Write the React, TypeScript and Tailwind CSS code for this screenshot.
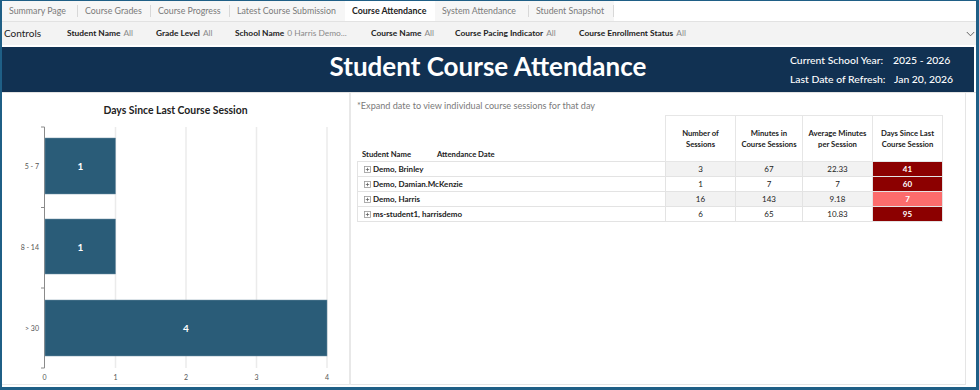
import React from "react";

const tabs = [
  { label: "Summary Page", cls: "w-[75px]", sep: true, active: false },
  { label: "Course Grades", cls: "w-[72px]", sep: true, active: false },
  { label: "Course Progress", cls: "w-[78px]", sep: true, active: false },
  { label: "Latest Course Submission", cls: "w-[115px]", sep: false, active: false },
  { label: "Course Attendance", cls: "w-[90px]", sep: false, active: true },
  { label: "System Attendance", cls: "w-[93px]", sep: true, active: false },
  { label: "Student Snapshot", cls: "w-[84px]", sep: true, active: false },
];

const filters = [
  { label: "Student Name", value: "All", cls: "w-[89px]" },
  { label: "Grade Level", value: "All", cls: "w-[79px]" },
  { label: "School Name", value: "0 Harris Demo...", cls: "w-[136px]" },
  { label: "Course Name", value: "All", cls: "w-[84px]" },
  { label: "Course Pacing Indicator", value: "All", cls: "w-[124px]" },
  { label: "Course Enrollment Status", value: "All", cls: "" },
];

const rows = [
  { name: "Demo, Brinley", n: "3", m: "67", a: "22.33", d: "41", dc: "bg-[#8c0000]", band: true },
  { name: "Demo, Damian.McKenzie", n: "1", m: "7", a: "7", d: "60", dc: "bg-[#8c0000]", band: false },
  { name: "Demo, Harris", n: "16", m: "143", a: "9.18", d: "7", dc: "bg-[#fc6c6c]", band: true },
  { name: "ms-student1, harrisdemo", n: "6", m: "65", a: "10.83", d: "95", dc: "bg-[#8c0000]", band: false },
];

function PlusBox() {
  return (
    <svg width="7" height="7" viewBox="0 0 7 7" className="shrink-0">
      <rect x="0.5" y="0.5" width="6" height="6" fill="white" stroke="#9a9a9a" strokeWidth="0.8" />
      <line x1="1.8" y1="3.5" x2="5.2" y2="3.5" stroke="#555" strokeWidth="0.7" />
      <line x1="3.5" y1="1.8" x2="3.5" y2="5.2" stroke="#555" strokeWidth="0.7" />
    </svg>
  );
}

function Chart() {
  const grid = [115.5, 186, 256.5, 327];
  const xt = [
    { x: 44.5, t: "0" },
    { x: 115.5, t: "1" },
    { x: 186, t: "2" },
    { x: 256.5, t: "3" },
    { x: 327, t: "4" },
  ];
  const ticks = [127, 207.5, 288, 368];
  return (
    <svg width="347" height="267" viewBox="2 117 347 267" className="block">
      {grid.map((x) => (
        <line key={x} x1={x} y1={127} x2={x} y2={368} stroke="#ebebeb" strokeWidth="1.5" />
      ))}
      <line x1={44.5} y1={127} x2={44.5} y2={368} stroke="#8a8a8a" strokeWidth="1" />
      {ticks.map((y) => (
        <line key={y} x1={41} y1={y} x2={44.5} y2={y} stroke="#8a8a8a" strokeWidth="1" />
      ))}
      <rect x={45} y={138} width={70.5} height={56} fill="#2a5c78" stroke="#6f90a5" strokeWidth="0.5" />
      <rect x={45} y={219} width={70.5} height={55} fill="#2a5c78" stroke="#6f90a5" strokeWidth="0.5" />
      <rect x={45} y={300} width={282} height={56} fill="#2a5c78" stroke="#6f90a5" strokeWidth="0.5" />
      <g fill="#ffffff" fontSize="10" fontWeight="700" textAnchor="middle" dominantBaseline="central" fontFamily="Lato, sans-serif">
        <text x={80.5} y={166}>1</text>
        <text x={80.5} y={246.5}>1</text>
        <text x={186} y={328}>4</text>
      </g>
      <g fill="#555" fontSize="7" textAnchor="end" dominantBaseline="central" fontFamily="Lato, sans-serif">
        <text x={39} y={166}>5 - 7</text>
        <text x={39} y={246.5}>8 - 14</text>
        <text x={39} y={327.5}>&gt; 30</text>
      </g>
      <g fill="#555" fontSize="7" textAnchor="middle" dominantBaseline="central" fontFamily="Lato, sans-serif">
        {xt.map((t) => (
          <text key={t.t} x={t.x} y={376.5}>
            {t.t}
          </text>
        ))}
      </g>
    </svg>
  );
}

export default function App() {
  return (
    <div className="w-[979px] h-[390px] border-t border-l-2 border-r-[3px] border-b-[3px] border-[#1f5f86] bg-white flex flex-col overflow-hidden font-['Lato',sans-serif] text-[#222]">
      {/* Tabs */}
      <div className="h-[21px] flex shrink-0 border-b border-[#e2e2e2] bg-white">
        {tabs.map((t) => (
          <React.Fragment key={t.label}>
            <div
              className={
                t.active
                  ? `${t.cls} h-full flex items-center pl-[7px] bg-white text-[8.8px] font-bold text-[#222] whitespace-nowrap`
                  : `${t.cls} h-full flex items-center pl-[7px] bg-[#f6f6f6] text-[8.8px] text-[#7a7a7a] whitespace-nowrap`
              }
            >
              {t.label}
            </div>
            {t.sep && (
              <div className="w-px h-full bg-[#f6f6f6] flex items-center">
                <div className="w-px h-[12px] bg-[#d8d8d8]" />
              </div>
            )}
          </React.Fragment>
        ))}
      </div>

      {/* Controls */}
      <div className="h-[23px] shrink-0 bg-[#f3f3f3] flex items-center whitespace-nowrap">
        <div className="w-[65px] pl-[2px] text-[10px] text-[#222]">Controls</div>
        {filters.map((f) => (
          <div key={f.label} className={`${f.cls} flex items-center text-[8.4px]`}>
            <span className="font-bold text-[#222]">{f.label}</span>
            <span className="ml-[3px] text-[#8a8a8a]">{f.value}</span>
          </div>
        ))}
        <div className="ml-auto mr-[1px] flex items-center">
          <svg width="9" height="6" viewBox="0 0 9 6">
            <polyline points="0.8,1 4.5,4.8 8.2,1" fill="none" stroke="#555" strokeWidth="0.9" />
          </svg>
        </div>
      </div>

      {/* Banner */}
      <div className="mt-[2px] mr-[2px] h-[45px] shrink-0 bg-[#113152] grid grid-cols-[1fr_auto_1fr] items-center">
        <div />
        <div className="text-white font-bold text-[26px] leading-[31px] pb-[6px] whitespace-nowrap">
          Student Course Attendance
        </div>
        <div className="flex justify-end pr-[21px]">
          <div className="grid grid-cols-[103px_auto] text-white text-[10.4px] leading-[19px] font-medium whitespace-nowrap">
            <span>Current School Year:</span>
            <span>2025 - 2026</span>
            <span>Last Date of Refresh:</span>
            <span className="pl-[1px]">Jan 20, 2026</span>
          </div>
        </div>
      </div>

      {/* Content */}
      <div className="flex-1 flex border-t border-[#e3e3e3] pb-[2px] min-h-0">
        {/* Left panel */}
        <div className="w-[349px] shrink-0 border-r-2 border-b border-[#e8e8e8] flex flex-col">
          <div className="pt-[11px] text-center text-[10.4px] leading-[13px] font-bold text-[#222]">
            Days Since Last Course Session
          </div>
          <Chart />
        </div>

        {/* Right panel */}
        <div className="w-[615px] shrink-0 border-r border-b border-[#e5e5e5] pl-[6px] flex flex-col">
          <div className="pt-[7px] leading-[12px] text-[9.1px] text-[#7a7a7a] whitespace-nowrap">
            *Expand date to view individual course sessions for that day
          </div>
          <div className="mt-[3px] flex flex-col text-[7.7px]">
            {/* Header */}
            <div className="flex h-[47px]">
              <div className="w-[308px] border-b border-[#e3e3e3] flex items-end pb-[1px] pl-[5px] leading-[11px] font-bold">
                <span className="w-[75px]">Student Name</span>
                <span>Attendance Date</span>
              </div>
              <div className="w-[70px] border-t border-l border-b border-[#e6e6e6] flex items-center justify-center text-center leading-[11px] font-bold">
                Number of<br />Sessions
              </div>
              <div className="w-[67px] border-t border-l border-b border-[#e6e6e6] flex items-center justify-center text-center leading-[11px] font-bold">
                Minutes in<br />Course Sessions
              </div>
              <div className="w-[70px] border-t border-l border-b border-[#e6e6e6] flex items-center justify-center text-center leading-[11px] font-bold">
                Average Minutes<br />per Session
              </div>
              <div className="w-[71px] border-t border-l border-r border-b border-[#e6e6e6] flex items-center justify-center text-center leading-[11px] font-bold">
                Days Since Last<br />Course Session
              </div>
            </div>
            {/* Rows */}
            {rows.map((r) => (
              <div key={r.name} className="flex h-[15px] text-[8px]">
                <div className="w-[308px] border-l border-b border-[#e3e3e3] flex items-center pl-[6px] gap-[2px] font-bold whitespace-nowrap">
                  <PlusBox />
                  <span>{r.name}</span>
                </div>
                <div className={`w-[70px] border-l border-b border-[#e3e3e3] flex items-center justify-center ${r.band ? "bg-[#f2f2f2]" : "bg-white"}`}>
                  {r.n}
                </div>
                <div className={`w-[67px] border-l border-b border-[#e3e3e3] flex items-center justify-center ${r.band ? "bg-[#f2f2f2]" : "bg-white"}`}>
                  {r.m}
                </div>
                <div className={`w-[70px] border-l border-b border-[#e3e3e3] flex items-center justify-center ${r.band ? "bg-[#f2f2f2]" : "bg-white"}`}>
                  {r.a}
                </div>
                <div className={`w-[71px] border-l border-r border-b border-[#e3e3e3] flex items-center justify-center text-white font-bold ${r.dc}`}>
                  {r.d}
                </div>
              </div>
            ))}
          </div>
        </div>
      </div>
    </div>
  );
}
